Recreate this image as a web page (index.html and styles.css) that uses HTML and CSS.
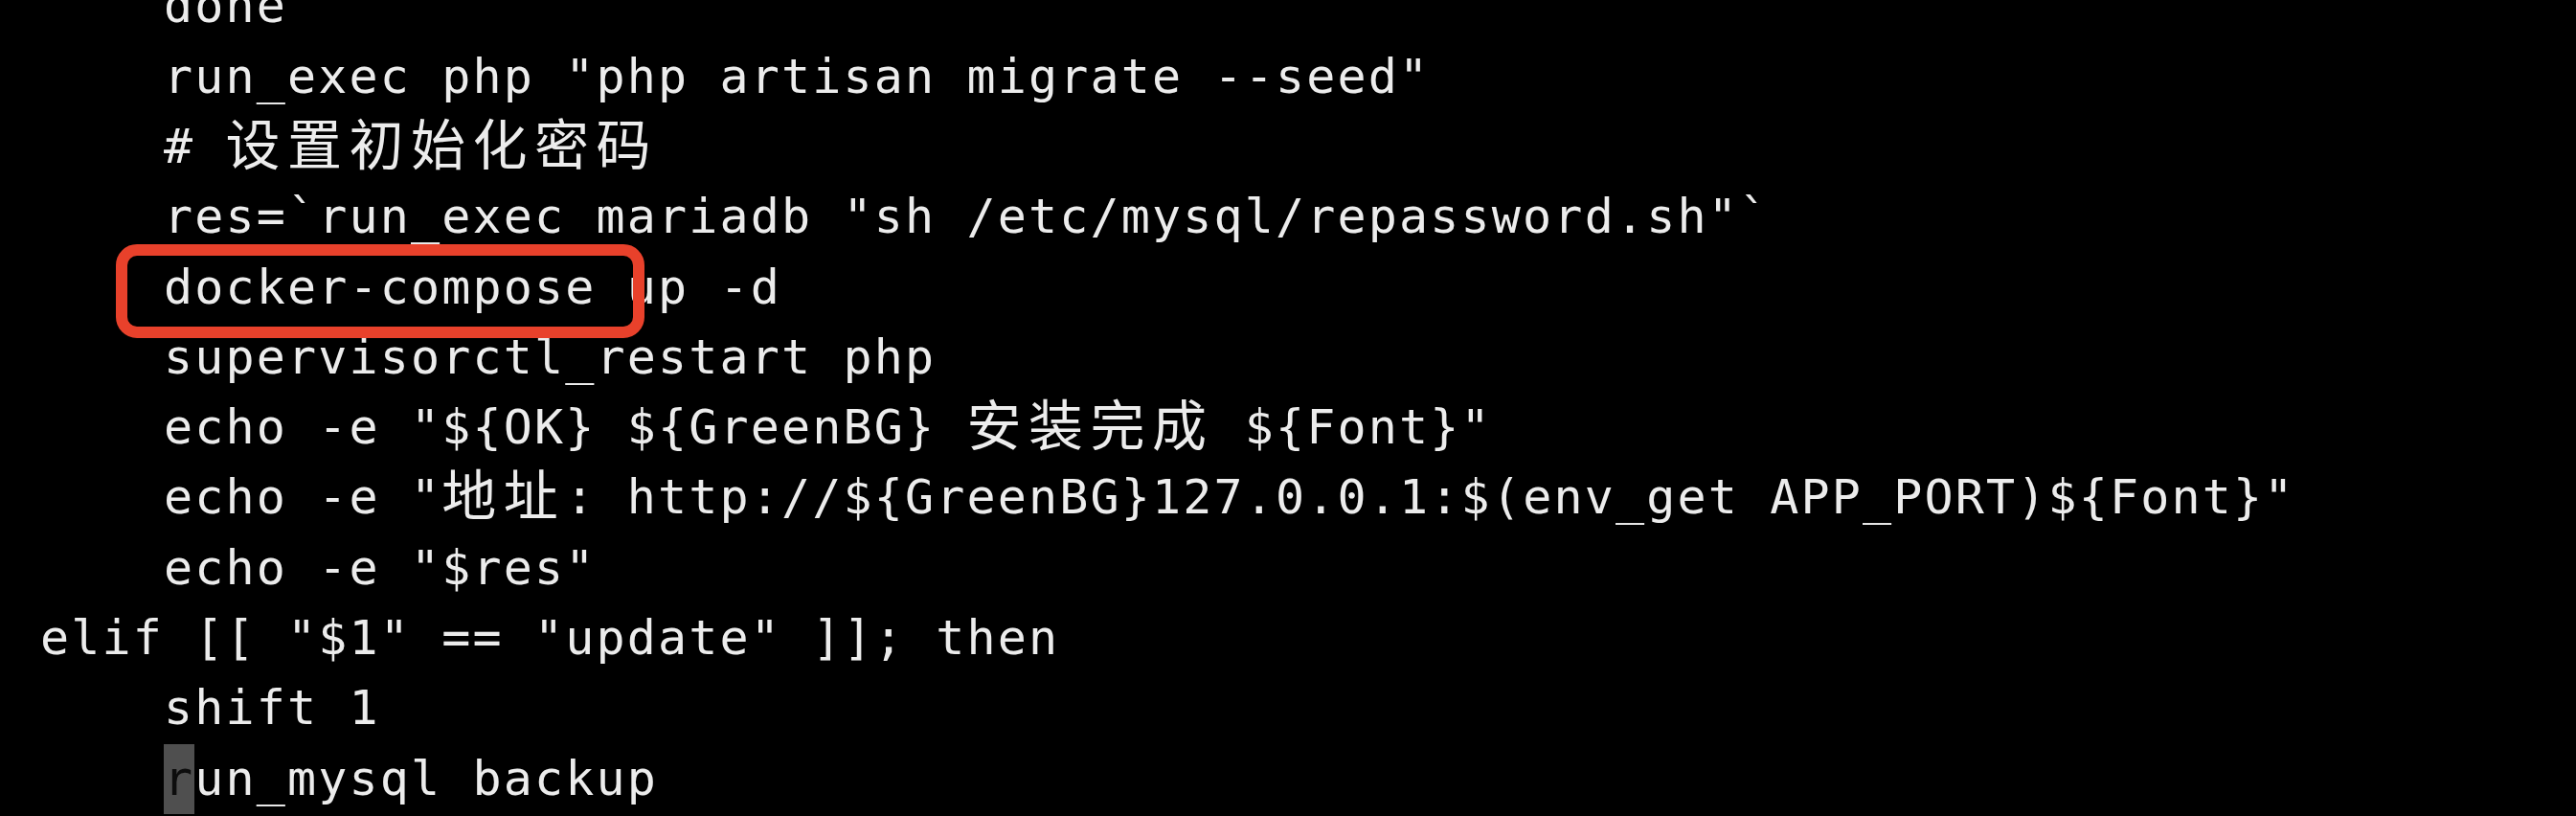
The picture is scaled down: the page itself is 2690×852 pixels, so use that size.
FILE: index.html
```html
<!DOCTYPE html>
<html lang="zh">
<head>
<meta charset="utf-8">
<title>terminal</title>
<link rel="stylesheet" href="styles.css">
</head>
<body>
<div class="term">
<div class="ln">    done</div>
<div class="ln">    run_exec php "php artisan migrate --seed"</div>
<div class="ln">    # <span class="cjk">设置初始化密码</span></div>
<div class="ln">    res=`run_exec mariadb "sh /etc/mysql/repassword.sh"`</div>
<div class="ln ln-mark">    docker-compose up -d<span class="mark"></span></div>
<div class="ln">    supervisorctl_restart php</div>
<div class="ln">    echo -e "${OK} ${GreenBG} <span class="cjk">安装完成</span> ${Font}"</div>
<div class="ln">    echo -e "<span class="cjk">地址</span>: http://${GreenBG}127.0.0.1:$(env_get APP_PORT)${Font}"</div>
<div class="ln">    echo -e "$res"</div>
<div class="ln">elif [[ "$1" == "update" ]]; then</div>
<div class="ln">    shift 1</div>
<div class="ln">    <span class="cursor">r</span>un_mysql backup</div>
</div>
</body>
</html>
```
FILE: styles.css
```css
html, body {
  margin: 0;
  padding: 0;
  background: #000;
  overflow: hidden;
}

.term {
  margin-top: -29.6px;
  padding-left: 42px;
  color: #ececec;
  font-family: "DejaVu Sans Mono", "Liberation Mono", monospace;
  font-size: 50px;
  letter-spacing: 2.15px;
}

.ln {
  height: 73.3px;
  line-height: 73.3px;
  white-space: pre;
}

.ln-mark {
  position: relative;
}

.cjk {
  font-family: "Noto Sans CJK SC", sans-serif;
  font-size: 57px;
  line-height: 1;
  letter-spacing: 7.5px;
  position: relative;
  top: 2px;
}

.mark {
  position: absolute;
  left: 79px;
  top: -8.4px;
  width: 552px;
  height: 98px;
  box-sizing: border-box;
  border: 12px solid #e8412b;
  border-radius: 22px;
}

.cursor {
  display: inline-block;
  height: 73.3px;
  background: #4f4f4f;
  color: #0d0d0d;
}
```
